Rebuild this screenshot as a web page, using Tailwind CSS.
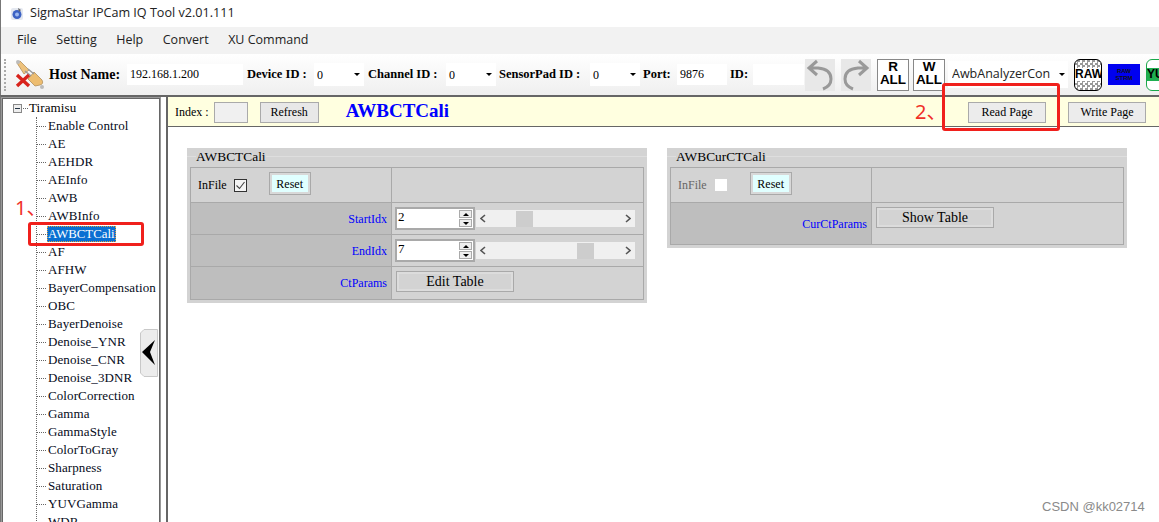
<!DOCTYPE html>
<html lang="en">
<head>
  <meta charset="UTF-8">
  <title>SigmaStar IPCam IQ Tool</title>
  <script src="https://cdn.jsdelivr.net/npm/@tailwindcss/browser@4"></script>
</head>
<body class="bg-white">
<div class="relative w-[1159px] h-[522px] overflow-hidden font-['Liberation_Serif',serif] text-black">

  <!-- title bar -->
  <div class="h-[27px] flex items-center border-l border-[#777] bg-white font-['Open_Sans',sans-serif] text-[12.6px] text-[#222]">
    <svg class="ml-[9px] w-[14px] h-[14px]" viewBox="0 0 14 14"><rect x="1" y="1" width="12" height="12" rx="2" fill="#e4e8f0"/><circle cx="7" cy="7.5" r="4.5" fill="#3c62c4"/><circle cx="7" cy="7.5" r="2" fill="#9db8ee"/><path d="M8 1l3 2-2 2z" fill="#666"/></svg>
    <span class="ml-[6px]">SigmaStar IPCam IQ Tool v2.01.111</span>
  </div>

  <!-- menu -->
  <div class="h-[27px] flex items-center border-l border-[#777] bg-[#f2f2f2] font-['Open_Sans',sans-serif] text-[12.5px] text-[#222] pl-[16px] gap-[19.5px]">
    <span>File</span><span>Setting</span><span>Help</span><span>Convert</span><span>XU Command</span>
  </div>

  <!-- toolbar -->
  <div class="h-[41px] flex items-center overflow-hidden whitespace-nowrap border-l border-[#777] bg-gradient-to-b from-white to-[#efefef] text-[12.5px] font-bold *:shrink-0">
    <span class="ml-[3px] w-[2px] h-[32px] border-l-2 border-dotted border-[#aaa]"></span>
    <svg class="ml-[8px] w-[31px] h-[31px]" viewBox="0 0 31 31">
      <path d="M3 4l3-2 9 9-5 4z" fill="#eec27c" stroke="#a88550" stroke-width=".7"/>
      <path d="M14 20l6-7 8 8q2 4-2 5l-5 1z" fill="#edbd70" stroke="#a88550" stroke-width=".7"/>
      <path d="M11 12l6 5M14 10l6 5" stroke="#999" stroke-width="1.5"/>
      <circle cx="4" cy="3" r="2" fill="#bbb"/><circle cx="28" cy="28" r="2" fill="#bbb"/>
      <path d="M3 16l12 11M15 16L3 27" stroke="#d8231c" stroke-width="3.4"/>
    </svg>
    <span class="ml-[4px] w-[78px] text-[14px]">Host Name:</span>
    <span class="w-[116px] h-[21px] bg-white pl-[3px] leading-[21px] font-normal text-[12px]">192.168.1.200</span>
    <span class="ml-[4px] w-[67px]">Device ID :</span>
    <span class="w-[50px] h-[23px] bg-white flex items-center justify-between pl-[3px] pr-[4px] font-normal text-[12px]">0<i class="border-x-[3px] border-t-[3px] border-x-transparent border-t-black"></i></span>
    <span class="ml-[4px] w-[78px]">Channel ID :</span>
    <span class="w-[50px] h-[23px] bg-white flex items-center justify-between pl-[3px] pr-[4px] font-normal text-[12px]">0<i class="border-x-[3px] border-t-[3px] border-x-transparent border-t-black"></i></span>
    <span class="ml-[3px] w-[91px]">SensorPad ID :</span>
    <span class="w-[50px] h-[23px] bg-white flex items-center justify-between pl-[3px] pr-[4px] font-normal text-[12px]">0<i class="border-x-[3px] border-t-[3px] border-x-transparent border-t-black"></i></span>
    <span class="ml-[3px] w-[34px]">Port:</span>
    <span class="w-[50px] h-[21px] bg-white pl-[3px] leading-[21px] font-normal text-[12px]">9876</span>
    <span class="ml-[3px] w-[23px]">ID:</span>
    <span class="w-[51px] h-[21px] bg-white"></span>
    <span class="ml-[1px] w-[30px] h-[32px] bg-[#e8e8e8] flex items-center justify-center">
      <svg class="w-[30px] h-[32px]" viewBox="0 0 30 32" fill="none" stroke="#999" stroke-width="3"><path d="M4 9h9q13 1 13 11 0 7-8 10M12 2L4 9l8 7"/></svg>
    </span>
    <span class="ml-[6px] w-[30px] h-[32px] bg-[#e8e8e8] flex items-center justify-center">
      <svg class="w-[30px] h-[32px]" viewBox="0 0 30 32" fill="none" stroke="#999" stroke-width="3"><path d="M26 9h-9Q4 10 4 20q0 7 8 10M18 2l8 7-8 7"/></svg>
    </span>
    <span class="ml-[6px] w-[32px] h-[32px] pb-[3px] bg-white border border-[#888] flex items-center justify-center text-center font-['Liberation_Sans',sans-serif] text-[13.5px] leading-[13px]">R<br>ALL</span>
    <span class="ml-[4px] w-[32px] h-[32px] pb-[3px] bg-white border border-[#888] flex items-center justify-center text-center font-['Liberation_Sans',sans-serif] text-[13.5px] leading-[13px]">W<br>ALL</span>
    <span class="ml-[3px] w-[120px] h-[27px] bg-white flex items-center justify-between pl-[4px] pr-[3px] font-['Open_Sans',sans-serif] font-normal text-[12.5px] text-[#222]"><span class="w-[98px] overflow-hidden">AwbAnalyzerCon</span><i class="border-x-[3px] border-t-[3px] border-x-transparent border-t-black"></i></span>
    <span class="ml-[6px] w-[28px] h-[32px] rounded-[6px] border border-black flex items-center justify-center overflow-hidden font-['Liberation_Sans',sans-serif] text-[12px] bg-[repeating-conic-gradient(#999_0_25%,#fff_0_50%)] bg-[length:5px_5px]"><span class="bg-white w-full text-center leading-[13px]">RAW</span></span>
    <span class="ml-[6px] w-[32px] h-[21px] bg-[#0000f0] flex flex-col items-center justify-center font-['Liberation_Sans',sans-serif] text-[6px] leading-[7px] text-[#111]"><span>RAW</span><span>STRM</span></span>
    <span class="ml-[6px] w-[30px] h-[32px] rounded-[6px] border border-[#1aa84a] flex items-center overflow-hidden bg-white font-['Liberation_Sans',sans-serif] text-[12px]"><span class="bg-[#1fae50] w-full h-[13px] leading-[13px]">YUV</span></span>
  </div>

  <!-- main -->
  <div class="h-[427px] flex border-t-2 border-[#666] border-l border-l-[#777]">
    <!-- tree -->
    <div class="relative w-[158px] ml-[1px] mt-[1px] h-[430px] border border-[#666] outline-1 outline-[#999] bg-white text-[13px] tracking-[.1px] pl-[10px] overflow-hidden shrink-0">
      <div class="h-[18px] flex items-center">
        <span class="w-[9px] h-[9px] border border-[#888] bg-[#eee] flex items-center justify-center"><i class="w-[5px] h-px bg-[#234]"></i></span>
        <i class="w-[5px] ml-px border-t border-dotted border-[#666]"></i>
        <span class="ml-[1px]">Tiramisu</span>
      </div>
      <ul class="ml-[23px] border-l border-dotted border-[#666] text-[#050a20]">
        <li class="h-[18px] flex items-center"><i class="w-[9px] border-t border-dotted border-[#666]"></i><span class="ml-[2px]">Enable Control</span></li>
        <li class="h-[18px] flex items-center"><i class="w-[9px] border-t border-dotted border-[#666]"></i><span class="ml-[2px]">AE</span></li>
        <li class="h-[18px] flex items-center"><i class="w-[9px] border-t border-dotted border-[#666]"></i><span class="ml-[2px]">AEHDR</span></li>
        <li class="h-[18px] flex items-center"><i class="w-[9px] border-t border-dotted border-[#666]"></i><span class="ml-[2px]">AEInfo</span></li>
        <li class="h-[18px] flex items-center"><i class="w-[9px] border-t border-dotted border-[#666]"></i><span class="ml-[2px]">AWB</span></li>
        <li class="h-[18px] flex items-center"><i class="w-[9px] border-t border-dotted border-[#666]"></i><span class="ml-[2px]">AWBInfo</span></li>
        <li class="h-[18px] flex items-center"><i class="w-[9px] border-t border-dotted border-[#666]"></i><span class="ml-[1px] h-[16px] leading-[15px] bg-[#0a6fd2] text-white border border-dotted border-[#e0a040] text-[12.8px] tracking-normal">AWBCTCali</span></li>
        <li class="h-[18px] flex items-center"><i class="w-[9px] border-t border-dotted border-[#666]"></i><span class="ml-[2px]">AF</span></li>
        <li class="h-[18px] flex items-center"><i class="w-[9px] border-t border-dotted border-[#666]"></i><span class="ml-[2px]">AFHW</span></li>
        <li class="h-[18px] flex items-center"><i class="w-[9px] border-t border-dotted border-[#666]"></i><span class="ml-[2px]">BayerCompensation</span></li>
        <li class="h-[18px] flex items-center"><i class="w-[9px] border-t border-dotted border-[#666]"></i><span class="ml-[2px]">OBC</span></li>
        <li class="h-[18px] flex items-center"><i class="w-[9px] border-t border-dotted border-[#666]"></i><span class="ml-[2px]">BayerDenoise</span></li>
        <li class="h-[18px] flex items-center"><i class="w-[9px] border-t border-dotted border-[#666]"></i><span class="ml-[2px]">Denoise_YNR</span></li>
        <li class="h-[18px] flex items-center"><i class="w-[9px] border-t border-dotted border-[#666]"></i><span class="ml-[2px]">Denoise_CNR</span></li>
        <li class="h-[18px] flex items-center"><i class="w-[9px] border-t border-dotted border-[#666]"></i><span class="ml-[2px]">Denoise_3DNR</span></li>
        <li class="h-[18px] flex items-center"><i class="w-[9px] border-t border-dotted border-[#666]"></i><span class="ml-[2px]">ColorCorrection</span></li>
        <li class="h-[18px] flex items-center"><i class="w-[9px] border-t border-dotted border-[#666]"></i><span class="ml-[2px]">Gamma</span></li>
        <li class="h-[18px] flex items-center"><i class="w-[9px] border-t border-dotted border-[#666]"></i><span class="ml-[2px]">GammaStyle</span></li>
        <li class="h-[18px] flex items-center"><i class="w-[9px] border-t border-dotted border-[#666]"></i><span class="ml-[2px]">ColorToGray</span></li>
        <li class="h-[18px] flex items-center"><i class="w-[9px] border-t border-dotted border-[#666]"></i><span class="ml-[2px]">Sharpness</span></li>
        <li class="h-[18px] flex items-center"><i class="w-[9px] border-t border-dotted border-[#666]"></i><span class="ml-[2px]">Saturation</span></li>
        <li class="h-[18px] flex items-center"><i class="w-[9px] border-t border-dotted border-[#666]"></i><span class="ml-[2px]">YUVGamma</span></li>
        <li class="h-[18px] flex items-center"><i class="w-[9px] border-t border-dotted border-[#666]"></i><span class="ml-[2px]">WDR</span></li>
      </ul>
      <!-- collapse handle -->
      <svg class="absolute left-[137px] top-[230px] w-[18px] h-[48px]" viewBox="0 0 18 48"><path d="M4 .5h13.500v47H4L.5 44V4z" fill="#ececec" stroke="#c8c8c8"/><path d="M15 11L2 23l13 13-5-13z" fill="#000"/></svg>
    </div>

    <!-- right side -->
    <div class="ml-[6px] flex-1 border-l-2 border-[#666] min-w-0">
      <div class="h-[30px] pt-[1px] bg-[#ffffe0] border-b border-[#666] flex items-center text-[12px] whitespace-nowrap">
        <span class="ml-[7px]">Index :</span>
        <span class="ml-[5px] w-[34px] h-[21px] bg-[#f0f0f0] border border-[#aaa]"></span>
        <span class="ml-[12px] w-[59px] h-[21px] bg-[#e8e8e8] border border-[#aaa] flex items-center justify-center">Refresh</span>
        <span class="ml-[27px] -mt-[2px] text-[19px] font-bold text-[#0000ff]">AWBCTCali</span>
        <span class="ml-auto w-[78px] h-[21px] bg-[#ececec] border border-[#aaa] flex items-center justify-center">Read Page</span>
        <span class="ml-[22px] mr-[13px] w-[78px] h-[21px] bg-[#ececec] border border-[#aaa] flex items-center justify-center">Write Page</span>
      </div>

      <div class="flex items-start gap-[20px] pt-[21px] pl-[19px]">
        <!-- AWBCTCali panel -->
        <section class="w-[460px] bg-[#d3d3d3] px-[3px] pb-[3px] text-[12px]">
          <div class="relative h-[19px] pl-[6px] text-[13.4px] leading-[18px]">
            <i class="absolute left-[-3px] right-[-3px] top-[8px] h-px bg-[#dedede]"></i>
            <span class="relative bg-[#d3d3d3]">AWBCTCali</span>
          </div>
          <div class="border border-[#a9a9a9] grid grid-cols-[201px_1fr]">
            <div class="h-[34px] flex items-center border-r border-[#a9a9a9] pl-[7px]">
              <span>InFile</span>
              <span class="ml-[7px] w-[13px] h-[13px] border border-[#333] bg-[#f4f4f4] flex items-center justify-center">
                <svg class="w-[11px] h-[11px]" viewBox="0 0 11 11" fill="none" stroke="#444" stroke-width="1.100"><path d="M1.500 5.500l3 3 5-6.500"/></svg>
              </span>
              <span class="ml-[22px] -mt-[3px] w-[42px] h-[23px] border border-[#a9a9a9] shadow-[inset_0_0_0_2px_#d8d8d8] bg-[#e0ffff] flex items-center justify-center">Reset</span>
            </div>
            <div class="h-[34px]"></div>

            <div class="h-[32px] bg-[#bebebe] border-t border-r border-[#a9a9a9] flex items-center justify-end pr-[4px] text-[#0000ff]">StartIdx</div>
            <div class="h-[32px] border-t border-[#a9a9a9] flex items-center pl-[3px]">
              <span class="relative w-[80px] h-[23px] bg-white border-2 border-[#a9a9a9] pl-[1px] leading-[16px] text-[13px]">2
                <span class="absolute right-0 top-0 w-[15px] h-[19px] flex flex-col items-center justify-center gap-px">
                  <i class="w-[13px] h-[8px] border border-[#aaa] bg-[#eee] flex items-center justify-center"><b class="border-x-[3px] border-b-[3px] border-x-transparent border-b-black"></b></i>
                  <i class="w-[13px] h-[8px] border border-[#aaa] bg-[#eee] flex items-center justify-center"><b class="border-x-[3px] border-t-[3px] border-x-transparent border-t-black"></b></i>
                </span>
              </span>
              <span class="ml-[1px] w-[159px] h-[17px] bg-[#f0f0f0] flex items-center justify-between px-[4px]">
                <svg class="w-[6px] h-[9px]" viewBox="0 0 6 9" fill="none" stroke="#555" stroke-width="1.600"><path d="M5 1L1 4.500 5 8"/></svg>
                <i class="ml-[30px] w-[17px] h-[16px] bg-[#cdcdcd]"></i>
                <i class="flex-1"></i>
                <svg class="w-[6px] h-[9px]" viewBox="0 0 6 9" fill="none" stroke="#555" stroke-width="1.600"><path d="M1 1l4 3.500L1 8"/></svg>
              </span>
            </div>

            <div class="h-[32px] bg-[#bebebe] border-t border-r border-[#a9a9a9] flex items-center justify-end pr-[4px] text-[#0000ff]">EndIdx</div>
            <div class="h-[32px] border-t border-[#a9a9a9] flex items-center pl-[3px]">
              <span class="relative w-[80px] h-[23px] bg-white border-2 border-[#a9a9a9] pl-[1px] leading-[16px] text-[13px]">7
                <span class="absolute right-0 top-0 w-[15px] h-[19px] flex flex-col items-center justify-center gap-px">
                  <i class="w-[13px] h-[8px] border border-[#aaa] bg-[#eee] flex items-center justify-center"><b class="border-x-[3px] border-b-[3px] border-x-transparent border-b-black"></b></i>
                  <i class="w-[13px] h-[8px] border border-[#aaa] bg-[#eee] flex items-center justify-center"><b class="border-x-[3px] border-t-[3px] border-x-transparent border-t-black"></b></i>
                </span>
              </span>
              <span class="ml-[1px] w-[159px] h-[17px] bg-[#f0f0f0] flex items-center justify-between px-[4px]">
                <svg class="w-[6px] h-[9px]" viewBox="0 0 6 9" fill="none" stroke="#555" stroke-width="1.600"><path d="M5 1L1 4.500 5 8"/></svg>
                <i class="ml-[91px] w-[17px] h-[16px] bg-[#cdcdcd]"></i>
                <i class="flex-1"></i>
                <svg class="w-[6px] h-[9px]" viewBox="0 0 6 9" fill="none" stroke="#555" stroke-width="1.600"><path d="M1 1l4 3.500L1 8"/></svg>
              </span>
            </div>

            <div class="h-[33px] bg-[#bebebe] border-t border-r border-[#a9a9a9] flex items-center justify-end pr-[4px] text-[#0000ff]">CtParams</div>
            <div class="h-[33px] border-t border-[#a9a9a9] flex items-center pl-[4px]">
              <span class="-mt-[3px] w-[118px] h-[21px] border border-[#a9a9a9] shadow-[inset_0_0_0_2px_#dcdcdc] bg-[#d3d3d3] flex items-center justify-center text-[14px]">Edit Table</span>
            </div>
          </div>
        </section>

        <!-- AWBCurCTCali panel -->
        <section class="w-[460px] bg-[#d3d3d3] px-[3px] pb-[3px] text-[12px]">
          <div class="relative h-[19px] pl-[6px] text-[13.4px] leading-[18px]">
            <i class="absolute left-[-3px] right-[-3px] top-[8px] h-px bg-[#dedede]"></i>
            <span class="relative bg-[#d3d3d3]">AWBCurCTCali</span>
          </div>
          <div class="border border-[#a9a9a9] grid grid-cols-[201px_1fr]">
            <div class="h-[34px] flex items-center border-r border-[#a9a9a9] pl-[7px] text-[#666]">
              <span>InFile</span>
              <span class="ml-[8px] w-[12px] h-[12px] bg-white"></span>
              <span class="ml-[23px] -mt-[3px] w-[42px] h-[23px] border border-[#a9a9a9] shadow-[inset_0_0_0_2px_#d8d8d8] bg-[#e0ffff] flex items-center justify-center text-black">Reset</span>
            </div>
            <div class="h-[34px]"></div>
            <div class="h-[42px] bg-[#bebebe] border-t border-r border-[#a9a9a9] flex items-center justify-end pr-[4px] text-[#0000ff]">CurCtParams</div>
            <div class="h-[42px] border-t border-[#a9a9a9] pl-[4px] pt-[4px]">
              <span class="w-[118px] h-[21px] border border-[#a9a9a9] shadow-[inset_0_0_0_2px_#dcdcdc] bg-[#d3d3d3] flex items-center justify-center text-[14px]">Show Table</span>
            </div>
          </div>
        </section>
      </div>
    </div>
  </div>

  <!-- red annotations drawn on the screenshot -->
  <span class="absolute left-[28px] top-[222px] w-[116px] h-[24px] border-[3px] border-[#f0201c] rounded-[3px]"></span>
  <span class="absolute left-[942px] top-[83px] w-[118px] h-[48px] border-[3px] border-[#f0201c] rounded-[3px]"></span>
  <span class="absolute left-[15px] top-[194px] font-['Noto_Sans','Noto_Sans_CJK_SC',sans-serif] text-[20px] leading-[28px] text-[#f03028]">1、</span>
  <span class="absolute left-[915px] top-[98px] font-['Noto_Sans','Noto_Sans_CJK_SC',sans-serif] text-[20px] leading-[28px] text-[#f03028]">2、</span>
  <span class="absolute left-[1042px] top-[499px] font-['Liberation_Sans',sans-serif] text-[13px] leading-[16px] text-[#8a8a8a]">CSDN @kk02714</span>
</div>
</body>
</html>
